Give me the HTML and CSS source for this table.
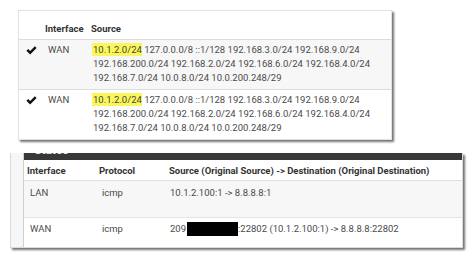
FILE: index.html
```html
<!DOCTYPE html>
<html>
<head>
<meta charset="utf-8">
<link rel="stylesheet" href="styles.css">
</head>
<body>
<div class="page">
  <div class="card-top">
    <div class="trow thead">
      <div class="c1"></div>
      <div class="c2">Interface</div>
      <div class="c3">Source</div>
    </div>
    <div class="trow tbody alt">
      <div class="c1"><svg class="check" width="11" height="9" viewBox="0 0 11 9"><path d="M0.4 4.7 L2.2 3.0 L4.1 5.0 L8.9 0.2 L10.6 1.9 L4.1 8.5 Z" fill="#111"/></svg></div>
      <div class="c2">WAN</div>
      <div class="c3"><span class="hl">10.1.2.0/24</span> 127.0.0.0/8 ::1/128 192.168.3.0/24 192.168.9.0/24<br>192.168.200.0/24 192.168.2.0/24 192.168.6.0/24 192.168.4.0/24<br>192.168.7.0/24 10.0.8.0/24 10.0.200.248/29</div>
    </div>
    <div class="trow tbody last">
      <div class="c1"><svg class="check" width="11" height="9" viewBox="0 0 11 9"><path d="M0.4 4.7 L2.2 3.0 L4.1 5.0 L8.9 0.2 L10.6 1.9 L4.1 8.5 Z" fill="#111"/></svg></div>
      <div class="c2">WAN</div>
      <div class="c3"><span class="hl">10.1.2.0/24</span> 127.0.0.0/8 ::1/128 192.168.3.0/24 192.168.9.0/24<br>192.168.200.0/24 192.168.2.0/24 192.168.6.0/24 192.168.4.0/24<br>192.168.7.0/24 10.0.8.0/24 10.0.200.248/29</div>
    </div>
  </div>

  <div class="card-bottom">
    <div class="panel">
      <div class="panel-title"><span>States</span></div>
      <div class="srow shead">
        <div>Interface</div>
        <div>Protocol</div>
        <div>Source (Original Source) -&gt; Destination (Original Destination)</div>
      </div>
      <div class="srow sbody alt">
        <div>LAN</div>
        <div>icmp</div>
        <div>10.1.2.100:1 -&gt; 8.8.8.8:1</div>
      </div>
      <div class="srow sbody wanrow">
        <div>WAN</div>
        <div>icmp</div>
        <div class="src">209<span class="redact"></span>:22802 (10.1.2.100:1) -&gt; 8.8.8.8:22802</div>
      </div>
    </div>
  </div>
</div>
</body>
</html>
```

FILE: styles.css
```css
html, body {
  margin: 0;
  padding: 0;
  background: #ffffff;
}
body {
  font-family: Roboto, "Liberation Sans", sans-serif;
  font-size: 9.5px;
  color: #4a4a4a;
  width: 474px;
  height: 260px;
  overflow: hidden;
}
.page {
  padding-top: 10px;
}

/* top card */
.card-top {
  margin-left: 18px;
  width: 374px;
  height: 130px;
  background: #ffffff;
  border: 1px solid #e2e2e2;
  box-sizing: border-box;
  box-shadow: 2px 2px 2px rgba(0, 0, 0, 0.55);
  display: flex;
  flex-direction: column;
}
.trow {
  display: grid;
  grid-template-columns: 26px 45px 1fr;
}
.thead {
  height: 29px;
  align-items: end;
  border-bottom: 1px solid #dcdcdc;
  box-sizing: border-box;
  font-weight: bold;
  color: #333333;
}
.thead > div {
  padding-bottom: 4px;
  line-height: 12px;
}
.thead .c3 {
  padding-left: 1px;
}
.tbody {
  height: 50px;
  box-sizing: border-box;
  padding-top: 3px;
  line-height: 13.8px;
  border-bottom: 1px solid #dcdcdc;
}
.tbody.last {
  border-bottom: none;
  flex: 1;
}
.alt {
  background: #f7f7f7;
}
.tbody .c1 {
  padding-left: 7px;
  padding-top: 3px;
}
.tbody .c2 {
  padding-left: 3px;
}
.tbody .c3 {
  padding-left: 3px;
  white-space: nowrap;
}
.check {
  display: block;
}
.hl {
  background: #fbf75a;
  color: #444444;
  padding: 1px 0 1px 1px;
  margin-left: -1px;
}

/* bottom card */
.card-bottom {
  margin-top: 13px;
  margin-left: 10px;
  width: 453px;
  height: 95px;
  box-sizing: border-box;
  background: #f6f6f6;
  border: 1px solid #dadada;
  border-top: none;
  box-shadow: 2px 2px 2px rgba(0, 0, 0, 0.55);
  padding-left: 12px;
  display: flex;
}
.panel {
  flex: 1;
  background: #ffffff;
  border-left: 1px solid #cfcfcf;
  display: flex;
  flex-direction: column;
}
.panel-title {
  height: 7px;
  background: #383838;
  overflow: hidden;
  color: #e8e8e8;
  font-size: 12px;
  font-weight: bold;
  padding-left: 10px;
}
.panel-title span {
  display: block;
  line-height: 14px;
  margin-top: -10px;
}
.srow {
  display: grid;
  grid-template-columns: 72px 70px 1fr;
}
.shead {
  height: 21px;
  align-items: center;
  border-bottom: 1px solid #e0e0e0;
  box-sizing: border-box;
  font-weight: bold;
  color: #333333;
}
.shead > div {
  padding-left: 3px;
  padding-top: 1px;
}
.sbody {
  height: 37px;
  box-sizing: border-box;
  padding-top: 6px;
  line-height: 12px;
  border-bottom: 1px solid #e4e4e4;
}
.sbody.wanrow {
  border-bottom: none;
  flex: 1;
  padding-top: 4px;
  line-height: 14px;
}
.sbody > div:nth-child(1),
.sbody > div:nth-child(2) {
  padding-left: 6px;
}
.sbody > div:nth-child(3) {
  padding-left: 4px;
}
.src {
  white-space: nowrap;
}
.redact {
  display: inline-block;
  vertical-align: top;
  width: 51px;
  height: 14px;
  background: #000000;
  margin-left: 1px;
}
```
